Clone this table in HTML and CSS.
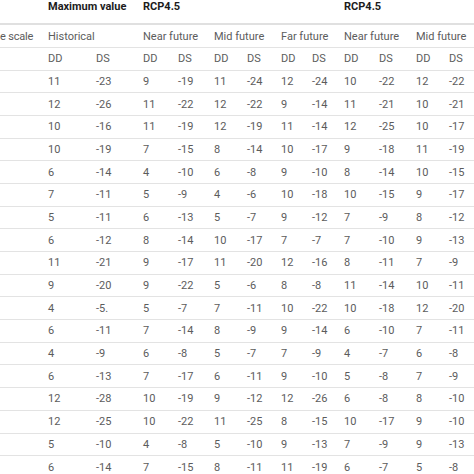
FILE: index.html
```html
<!DOCTYPE html>
<html>
<head>
<meta charset="utf-8">
<link rel="stylesheet" href="styles.css">
</head>
<body>
<div class="table">
  <div class="row top">
    <div class="cell label"></div>
    <div class="cell span2">Maximum value</div>
    <div class="cell span6">RCP4.5</div>
    <div class="cell span4">RCP4.5</div>
  </div>
  <div class="row head">
    <div class="cell label">e scale</div>
    <div class="cell span2">Historical</div>
    <div class="cell span2">Near future</div>
    <div class="cell span2">Mid future</div>
    <div class="cell span2">Far future</div>
    <div class="cell span2">Near future</div>
    <div class="cell span2">Mid future</div>
  </div>
  <div class="row head sub">
    <div class="cell label"></div>
    <div class="cell">DD</div><div class="cell">DS</div>
    <div class="cell">DD</div><div class="cell">DS</div>
    <div class="cell">DD</div><div class="cell">DS</div>
    <div class="cell">DD</div><div class="cell">DS</div>
    <div class="cell">DD</div><div class="cell">DS</div>
    <div class="cell">DD</div><div class="cell">DS</div>
  </div>
  <div id="body"></div>
</div>
<script src="script.js"></script>
</body>
</html>
```
FILE: script.js
```js
var data = [
  [11,-23,9,-19,11,-24,12,-24,10,-22,12,-22],
  [12,-26,11,-22,12,-22,9,-14,11,-21,10,-21],
  [10,-16,11,-19,12,-19,11,-14,12,-25,10,-17],
  [10,-19,7,-15,8,-14,10,-17,9,-18,11,-19],
  [6,-14,4,-10,6,-8,9,-10,8,-14,10,-15],
  [7,-11,5,-9,4,-6,10,-18,10,-15,9,-17],
  [5,-11,6,-13,5,-7,9,-12,7,-9,8,-12],
  [6,-12,8,-14,10,-17,7,-7,7,-10,9,-13],
  [11,-21,9,-17,11,-20,12,-16,8,-11,7,-9],
  [9,-20,9,-22,5,-6,8,-8,11,-14,10,-11],
  [4,"-5.",5,-7,7,-11,10,-22,10,-18,12,-20],
  [6,-11,7,-14,8,-9,9,-14,6,-10,7,-11],
  [4,-9,6,-8,5,-7,7,-9,4,-7,6,-8],
  [6,-13,7,-17,6,-11,9,-10,5,-8,7,-9],
  [12,-28,10,-19,9,-12,12,-26,6,-8,8,-10],
  [12,-25,10,-22,11,-25,8,-15,10,-17,9,-10],
  [5,-10,4,-8,5,-10,9,-13,7,-9,9,-13],
  [6,-14,7,-15,8,-11,11,-19,6,-7,5,-8]
];
var body = document.getElementById("body");
data.forEach(function (r) {
  var row = document.createElement("div");
  row.className = "row data";
  var c0 = document.createElement("div");
  c0.className = "cell label";
  row.appendChild(c0);
  r.forEach(function (v) {
    var c = document.createElement("div");
    c.className = "cell";
    c.textContent = String(v);
    row.appendChild(c);
  });
  body.appendChild(row);
});
```
FILE: styles.css
```css
html, body {
  margin: 0;
  padding: 0;
  background: #ffffff;
  overflow: hidden;
  width: 474px;
  height: 474px;
}
.table {
  width: 474px;
  font-family: Roboto, "Liberation Sans", sans-serif;
  font-size: 11px;
  color: #5c5c5c;
}
.row {
  display: grid;
  grid-template-columns: 40px 48px 47px 35px 36px 33px 34px 31px 32px 35px 37px 33px 33px;
  box-sizing: border-box;
  border-bottom: 1px solid #e3e3e3;
  align-items: center;
}
.cell {
  padding-left: 8px;
  line-height: 13px;
  white-space: nowrap;
}
.cell.label {
  padding-left: 0;
  letter-spacing: -0.2px;
}
.span2 { grid-column: span 2; }
.span4 { grid-column: span 4; }
.span6 { grid-column: span 6; }
.top {
  height: 25px;
  align-items: start;
  border-bottom: 2px solid #e0e0e0;
  color: #1c1c1c;
  font-weight: 700;
}
.head { height: 23px; }
.sub { height: 22.5px; }
.data { height: 22.7px; }
```
